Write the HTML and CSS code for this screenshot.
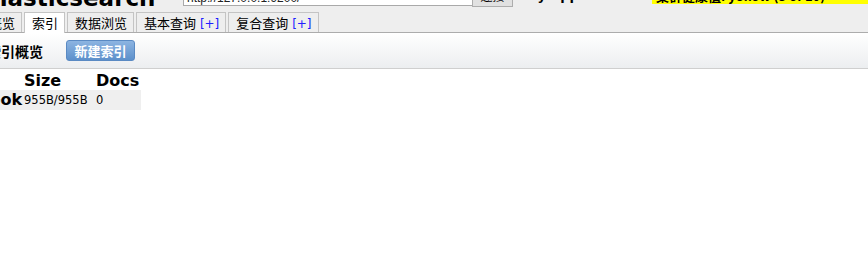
FILE: index.html
```html
<!DOCTYPE html>
<html>
<head>
<meta charset="utf-8">
<link rel="stylesheet" href="styles.css">
</head>
<body>
<div class="top">
  <div class="header">
    <div class="title">Elasticsearch</div>
    <div class="url">http://127.0.0.1:9200/</div>
    <div class="connect">连接</div>
    <div class="cluster">my-application</div>
    <div class="health">集群健康值: yellow (5 of 10)</div>
  </div>
  <div class="tabs">
    <div class="tab">概览</div>
    <div class="tab active">索引</div>
    <div class="tab">数据浏览</div>
    <div class="tab">基本查询<span class="plus"> [+]</span></div>
    <div class="tab">复合查询<span class="plus"> [+]</span></div>
  </div>
</div>
<div class="toolbar">
  <div class="tb-title">索引概览</div>
  <div class="btn">新建索引</div>
</div>
<table class="grid">
  <tr class="head">
    <th class="c-name"></th>
    <th class="c-size">Size</th>
    <th class="c-docs">Docs</th>
  </tr>
  <tr class="row">
    <td class="c-name name">book</td>
    <td class="c-size small">955B/955B</td>
    <td class="c-docs small">0</td>
  </tr>
</table>
</body>
</html>
```
FILE: styles.css
```css
html, body {
  margin: 0;
  padding: 0;
  background: #fff;
  overflow: hidden;
  width: 868px;
  height: 273px;
  font-family: "DejaVu Sans", "Noto Sans CJK SC", sans-serif;
  color: #000;
}

.top {
  background: #eeeeee;
}

.header {
  display: flex;
  align-items: flex-start;
  height: 36px;
  margin-top: -24px;
  margin-left: -16px;
  overflow: hidden;
}

.title {
  flex: 0 0 199px;
  font-family: "DejaVu Sans", sans-serif;
  font-weight: bold;
  font-size: 23px;
  line-height: 23px;
  margin-top: 11px;
  white-space: nowrap;
}

.url {
  box-sizing: border-box;
  flex: 0 0 290px;
  height: 20px;
  margin-top: 10px;
  background: #fff;
  border: 1px solid #a9a9a9;
  font-family: "Liberation Sans", sans-serif;
  font-size: 12px;
  line-height: 16px;
  padding: 3px 0 0 3px;
  color: #222;
  white-space: nowrap;
}

.connect {
  box-sizing: border-box;
  flex: 0 0 41px;
  height: 22px;
  margin-top: 9px;
  margin-left: -1px;
  background: #e1e1e1;
  border: 1px solid #adadad;
  font-family: "Noto Sans CJK SC", sans-serif;
  font-size: 12px;
  line-height: 20px;
  text-align: center;
}

.cluster {
  flex: 0 0 128px;
  margin-left: 11px;
  margin-top: 12px;
  font-weight: bold;
  font-size: 13px;
  line-height: 16px;
  white-space: nowrap;
}

.health {
  flex: 1 0 auto;
  margin-top: 12px;
  height: 16px;
  background: #ffff00;
  font-family: "Noto Sans CJK SC", sans-serif;
  font-weight: bold;
  font-size: 13px;
  line-height: 16px;
  padding-left: 4px;
  white-space: nowrap;
}

.tabs {
  display: flex;
  align-items: flex-end;
  gap: 2px;
  height: 20px;
  margin-left: -19px;
  border-bottom: 1px solid #acacac;
}

.tab {
  height: 19px;
  padding: 0 6px 0 7px;
  border: 1px solid #c4c4c4;
  border-bottom: none;
  background: #eeeeee;
  font-family: "Noto Sans CJK SC", sans-serif;
  font-size: 13px;
  line-height: 19px;
  white-space: nowrap;
}

.tab.active {
  background: #fff;
  height: 20px;
  margin-bottom: -1px;
}

.plus {
  color: #2020ff;
  font-family: "DejaVu Sans", sans-serif;
  font-size: 12px;
}

.toolbar {
  display: flex;
  align-items: center;
  height: 35px;
  margin-left: -13px;
  background: linear-gradient(to bottom, #ffffff, #eceef0);
  border-bottom: 1px solid #cfcfcf;
}

.tb-title {
  font-family: "Noto Sans CJK SC", sans-serif;
  font-weight: bold;
  font-size: 14px;
  width: 79px;
  white-space: nowrap;
}

.btn {
  box-sizing: border-box;
  width: 69px;
  height: 21px;
  border: 1px solid #5a8ac3;
  border-radius: 3px;
  background: linear-gradient(to bottom, #8cb4e1, #5d90cb);
  color: #fff;
  font-family: "Noto Sans CJK SC", sans-serif;
  font-weight: bold;
  font-size: 13px;
  line-height: 19px;
  text-align: center;
}

.grid {
  border-collapse: collapse;
  margin-left: -22px;
  table-layout: fixed;
}

.grid th, .grid td {
  padding: 0;
  text-align: left;
  white-space: nowrap;
}

.grid .head th {
  font-family: "DejaVu Sans", sans-serif;
  font-weight: bold;
  font-size: 16px;
  line-height: 19px;
  padding-top: 2px;
}

.c-name { width: 46px; }
.c-size { width: 72px; }
.c-docs { width: 45px; }

.row td {
  background: #efefef;
  height: 20px;
  line-height: 20px;
}

.name {
  font-family: "DejaVu Sans", sans-serif;
  font-weight: bold;
  font-size: 16px;
}

.small {
  font-family: "DejaVu Sans", sans-serif;
  font-size: 11.5px;
}
```
